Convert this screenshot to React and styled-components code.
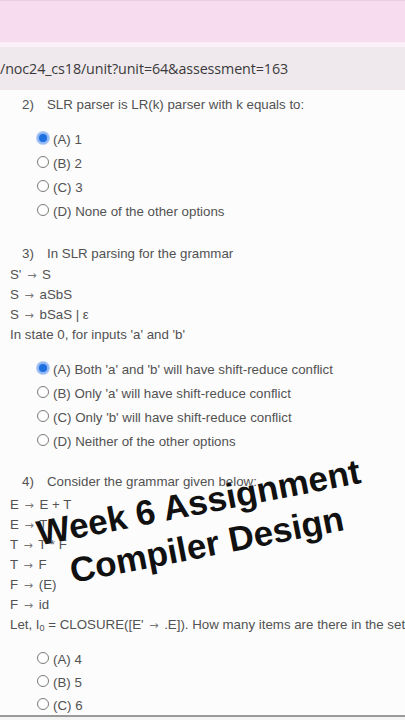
import React from 'react';
import styled, { createGlobalStyle } from 'styled-components';

const GlobalStyle = createGlobalStyle`
  html, body {
    margin: 0;
    padding: 0;
    background: #fcfcfc;
  }
  body {
    font-family: "Liberation Sans", Arial, sans-serif;
  }
`;

const questions = [
  {
    num: '2)',
    title: 'SLR parser is LR(k) parser with k equals to:',
    top: 5,
    lines: [],
    gap: 12,
    rowHeight: 24,
    options: [
      { label: '(A) 1', checked: true },
      { label: '(B) 2' },
      { label: '(C) 3' },
      { label: '(D) None of the other options' },
    ],
  },
  {
    num: '3)',
    title: 'In SLR parsing for the grammar',
    top: 21,
    lineTop: 1,
    lines: [
      ["S'", 'S'],
      ['S', 'aSbS'],
      ['S', 'bSaS | ε'],
      "In state 0, for inputs 'a' and 'b'",
    ],
    gap: 12,
    rowHeight: 24,
    options: [
      { label: "(A) Both 'a' and 'b' will have shift-reduce conflict", checked: true },
      { label: "(B) Only 'a' will have shift-reduce conflict" },
      { label: "(C) Only 'b' will have shift-reduce conflict" },
      { label: '(D) Neither of the other options' },
    ],
  },
  {
    num: '4)',
    title: 'Consider the grammar given below:',
    top: 19,
    lineTop: 3,
    lines: [
      ['E', 'E + T'],
      ['E', 'T'],
      ['T', 'T * F'],
      ['T', 'F'],
      ['F', '(E)'],
      ['F', 'id'],
      'closure',
    ],
    gap: 13,
    rowHeight: 23,
    options: [{ label: '(A) 4' }, { label: '(B) 5' }, { label: '(C) 6' }],
  },
];

const Line = ({ line }) => {
  if (line === 'closure') {
    return (
      <GrammarLine>
        Let, I<sub>0</sub> = CLOSURE([E' <Arrow>→</Arrow> .E]). How many items are there in the set I<sub>0</sub>?
      </GrammarLine>
    );
  }
  if (typeof line === 'string') return <GrammarLine>{line}</GrammarLine>;
  return (
    <GrammarLine>
      {line[0]} <Arrow>→</Arrow> {line[1]}
    </GrammarLine>
  );
};

const App = () => {
  return (
    <>
      <GlobalStyle />
      <Page>
        <TopBand />
        <Divider />
        <UrlBar>/noc24_cs18/unit?unit=64&amp;assessment=163</UrlBar>
        <Content>
          {questions.map((q) => (
            <Question key={q.num} top={q.top}>
              <QTitle>
                <QNum>{q.num}</QNum>
                {q.title}
              </QTitle>
              {q.lines.length > 0 && (
                <Grammar top={q.lineTop}>
                  {q.lines.map((l, j) => (
                    <Line key={j} line={l} />
                  ))}
                </Grammar>
              )}
              <Options gap={q.gap}>
                {q.options.map((o) => (
                  <Option key={o.label} h={q.rowHeight}>
                    <Radio checked={o.checked} />
                    {o.label}
                  </Option>
                ))}
              </Options>
            </Question>
          ))}
          <Watermark>
            <span>Week 6 Assignment</span>
            <span>Compiler Design</span>
          </Watermark>
        </Content>
        <Bottom />
      </Page>
    </>
  );
};

export default App;

const Page = styled.div`
  width: 405px;
  height: 720px;
  overflow: hidden;
  display: flex;
  flex-direction: column;
`;

const TopBand = styled.div`
  height: 42px;
  flex-shrink: 0;
  background: #f7dcef;
  border-top: 1px solid #e8cfe2;
  box-sizing: border-box;
`;

const Divider = styled.div`
  height: 5px;
  flex-shrink: 0;
  background: #fbf0f8;
`;

const UrlBar = styled.div`
  height: 43px;
  flex-shrink: 0;
  display: flex;
  align-items: center;
  background: #efe9ee;
  color: #3a3a3a;
  font-family: "Open Sans", "Liberation Sans", sans-serif;
  font-size: 14.3px;
  letter-spacing: -0.1px;
  white-space: nowrap;
`;

const Content = styled.div`
  position: relative;
  height: 627px;
  flex-shrink: 0;
  box-sizing: border-box;
  border-bottom: 2px solid #9a9a9a;
  overflow: hidden;
  color: #525252;
  font-size: 13.3px;
  white-space: nowrap;
`;

const Question = styled.div`
  margin-top: ${(p) => p.top}px;
`;

const QTitle = styled.div`
  height: 20px;
  line-height: 20px;
  padding-left: 22px;
`;

const QNum = styled.span`
  display: inline-block;
  width: 25px;
`;

const Grammar = styled.div`
  padding-left: 10px;
  margin-top: ${(p) => p.top || 0}px;
`;

const GrammarLine = styled.div`
  height: 20px;
  line-height: 20px;

  sub {
    font-size: 9px;
    vertical-align: -2px;
    line-height: 0;
  }
`;

const Arrow = styled.span`
  font-family: "DejaVu Sans", sans-serif;
  font-size: 11px;
  color: #777;
  margin: 0 2px;
`;

const Options = styled.div`
  margin-top: ${(p) => p.gap}px;
  padding-left: 37px;
`;

const Option = styled.div`
  display: flex;
  align-items: center;
  height: ${(p) => p.h}px;
  gap: 4px;
`;

const Radio = styled.span`
  width: 12px;
  height: 12px;
  border-radius: 50%;
  box-sizing: border-box;
  flex-shrink: 0;
  margin-top: -3px;
  border: ${(p) => (p.checked ? '2px solid #8fb6f2' : '1px solid #7a7a7a')};
  background: ${(p) => (p.checked ? '#1e6fe0' : '#fff')};
  box-shadow: ${(p) => (p.checked ? '0 0 0 1px #b7cff5' : 'none')};
`;

const Watermark = styled.div`
  position: absolute;
  left: 0;
  top: 390px;
  width: 405px;
  display: flex;
  flex-direction: column;
  align-items: center;
  transform: rotate(-11deg);
  font-family: "Liberation Sans", Arial, sans-serif;
  font-weight: 700;
  font-size: 35px;
  line-height: 43px;
  color: #111;
  text-shadow: 0 0 2px #fff;
  white-space: nowrap;
`;

const Bottom = styled.div`
  flex: 1;
  background: #f4f4f4;
`;
